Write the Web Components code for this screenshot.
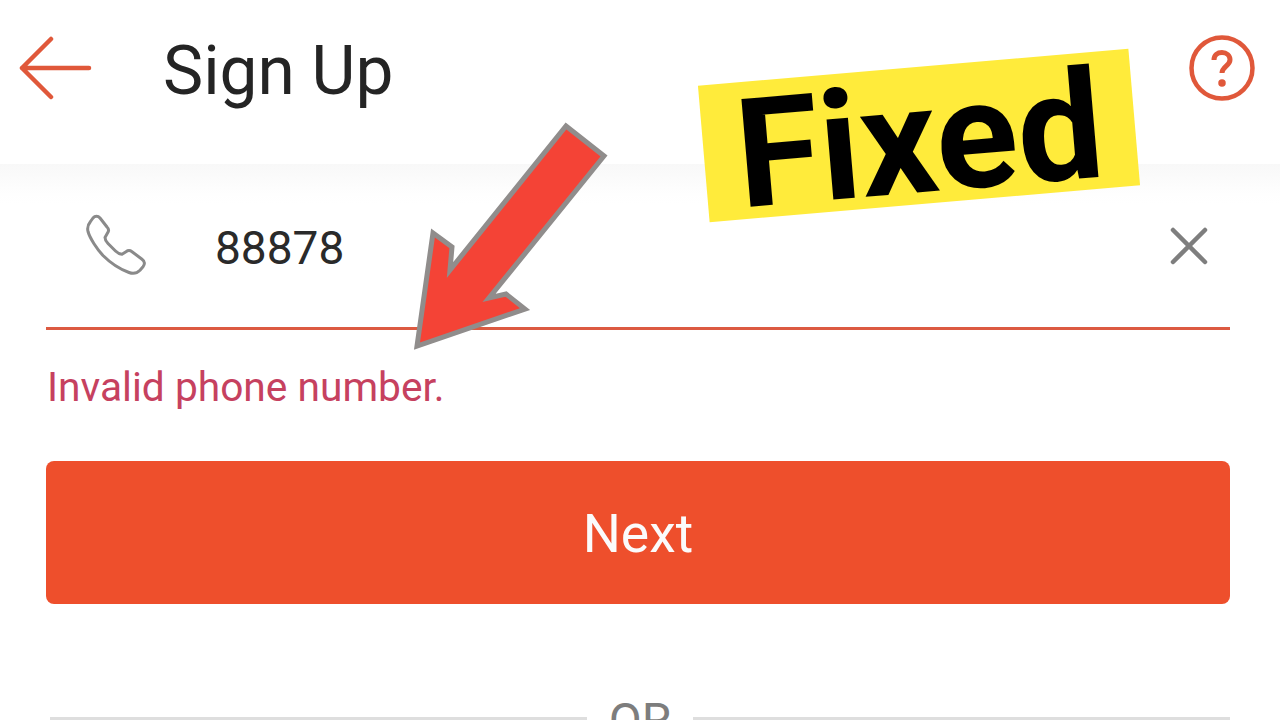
<!DOCTYPE html>
<html lang="en">
<head>
<meta charset="utf-8">
<title>Sign Up</title>
<style>
  html, body { margin: 0; height: 720px; overflow: hidden; background: #fff; }
  body { font-family: Roboto, "Liberation Sans", sans-serif; position: relative; }
</style>
</head>
<body>
<app-header>Sign Up</app-header>
<signup-form>
  <phone-field value="88878"></phone-field>
  <error-text>Invalid phone number.</error-text>
  <next-button>Next</next-button>
  <or-divider>OR</or-divider>
</signup-form>
<callout-arrow></callout-arrow>
<fixed-badge>Fixed</fixed-badge>
<script>
/**
 * Top bar with back arrow, title and help icon.
 */
customElements.define('app-header', class extends HTMLElement {
  constructor () {
    super()
    this.attachShadow({ mode: 'open' }).innerHTML = `
      <style>
        :host { display: flex; align-items: center; height: 164px; padding: 0 23px 28px 19px; box-sizing: border-box; background: #fff; }
        svg { display: block; flex: none; fill: none; stroke: #e0583a; stroke-linecap: round; stroke-linejoin: round; }
        h1 { flex: 1; margin: 6px 0 0 70px; font: 400 67.600px/72px Roboto, sans-serif; color: #242424; }
      </style>
      <svg width="74" height="64" viewBox="0 0 74 64" stroke-width="4.500"><path d="M70 32H3M32 3 3 32l29 29"/></svg>
      <h1><slot></slot></h1>
      <svg width="70" height="70" viewBox="0 0 70 70" stroke-width="4.500"><circle cx="35" cy="35" r="30.500"/><path d="M27 27c0-5 3.500-7.500 8-7.500s8 3 8 7.200c0 6-8 6.800-8 13.300" stroke-width="5" stroke-linecap="butt"/><circle cx="35" cy="50" r="1.500" fill="#e0583a"/></svg>
    `
  }
})

/**
 * Column holding the form, starts with a faint shadow strip under the header.
 */
customElements.define('signup-form', class extends HTMLElement {
  constructor () {
    super()
    this.attachShadow({ mode: 'open' }).innerHTML = `
      <style>
        :host { display: flex; flex-direction: column; height: 556px; padding: 0 50px 0 46px; background: linear-gradient(#f8f8f8, #fefefe 30px, #fff 40px); }
        ::slotted(*) { flex: none; }
      </style>
      <slot></slot>
    `
  }
})

/**
 * Phone number row with the red underline.
 */
customElements.define('phone-field', class extends HTMLElement {
  constructor () {
    super()
    this.attachShadow({ mode: 'open' }).innerHTML = `
      <style>
        :host { display: flex; align-items: center; height: 166px; padding: 4px 21px 0 40px; box-sizing: border-box; border-bottom: 3px solid #dc5a41; }
        svg { display: block; flex: none; fill: none; stroke-linecap: round; stroke-linejoin: round; margin-top: -3px; }
        span { flex: 1; margin-left: 67px; font: 400 46px/56px Roboto, sans-serif; color: #2a2a2a; }
      </style>
      <svg width="62" height="64" viewBox="86 214 62 64" stroke="#8a8a8a" stroke-width="3"><path d="M93 218c2-2.500 5-2.500 7 0l7 9c2 2 2 4 0.500 6l-2.500 4.500c0 2 1 4 3 6l7.500 7.500c2 2 4 3 6.500 3.200l4-2.500c2-1.500 4-1.500 6 0l10 7.500c3 2.200 3 5 1 7.500l-3 3.500c-3 3-7 3.800-11 2.300-11-4-19-10-26-17-6-6.500-13-17-15-24-1-4 0-7 2.500-10z"/></svg>
      <span></span>
      <svg width="40" height="40" viewBox="0 0 40 40" stroke="#7e7e7e" stroke-width="4.500"><path d="M4 4 36 36M36 4 4 36"/></svg>
    `
    this._value = this.shadowRoot.querySelector('span')
  }

  /**
   * Called after the element is inserted into the DOM.
   */
  connectedCallback () {
    this._value.textContent = this.getAttribute('value')
  }
})

/**
 * Validation message under the field.
 */
customElements.define('error-text', class extends HTMLElement {
  constructor () {
    super()
    this.attachShadow({ mode: 'open' }).innerHTML = `
      <style>
        :host { display: block; margin-top: 33px; padding-left: 1px; font: 400 40.700px/48px Roboto, sans-serif; color: #c6415f; }
      </style>
      <slot></slot>
    `
  }
})

/**
 * Big orange submit button.
 */
customElements.define('next-button', class extends HTMLElement {
  constructor () {
    super()
    this.attachShadow({ mode: 'open' }).innerHTML = `
      <style>
        :host { display: flex; align-items: center; justify-content: center; height: 143px; padding-top: 3px; box-sizing: border-box; margin-top: 50px; border-radius: 8px; background: #ee4f2c; color: #fbfbfb; font: 400 53.500px/56px Roboto, sans-serif; }
      </style>
      <slot></slot>
    `
  }
})

/**
 * "OR" text with a rule on each side, cut off by the bottom of the screen.
 */
customElements.define('or-divider', class extends HTMLElement {
  constructor () {
    super()
    this.attachShadow({ mode: 'open' }).innerHTML = `
      <style>
        :host { display: flex; align-items: center; height: 48px; margin-top: 90px; margin-left: 4px; gap: 22px; color: #7d7d7d; font: 400 48px/48px Roboto, sans-serif; }
        i { flex: 1; height: 3px; background: #dedede; }
        i:first-child { flex: none; width: 535px; }
        span { margin: 3px 0 -3px; }
      </style>
      <i></i><span><slot></slot></span><i></i>
    `
  }
})

/**
 * Red arrow drawn on top of the screenshot.
 */
customElements.define('callout-arrow', class extends HTMLElement {
  constructor () {
    super()
    this.attachShadow({ mode: 'open' }).innerHTML = `
      <style>
        :host { position: absolute; left: 410px; top: 120px; width: 200px; height: 232px; }
        svg { display: block; }
      </style>
      <svg width="200" height="232" viewBox="410 120 200 232"><polygon points="566,126 604,156 489,298 506,294 525,309 417,346 433,233 452,247 450,270" fill="#f44336" stroke="#908d8c" stroke-width="5" stroke-linejoin="miter"/></svg>
    `
  }
})

/**
 * Tilted yellow "Fixed" label.
 */
customElements.define('fixed-badge', class extends HTMLElement {
  constructor () {
    super()
    this.attachShadow({ mode: 'open' }).innerHTML = `
      <style>
        :host { position: absolute; left: 703px; top: 67px; width: 432px; height: 137px; padding-top: 10px; box-sizing: border-box; display: flex; align-items: center; justify-content: center; background: #ffeb3b; transform: rotate(-4.900deg); color: #000; font: 700 152px/127px Roboto, sans-serif; }
      </style>
      <slot></slot>
    `
  }
})
</script>
</body>
</html>
